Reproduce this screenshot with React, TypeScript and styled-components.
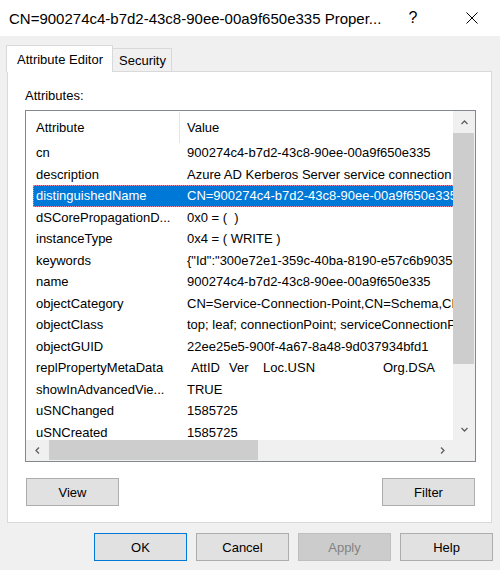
import React from "react";
import styled, { createGlobalStyle } from "styled-components";

const GlobalStyle = createGlobalStyle`
  html, body {
    margin: 0;
    padding: 0;
    background: #f0f0f0;
  }
  body {
    font-family: "Liberation Sans", Arial, sans-serif;
    font-size: 13px;
    color: #000;
  }
  * {
    box-sizing: border-box;
  }
`;

type Attr = {
  name: string;
  value: string;
  selected?: boolean;
  meta?: boolean;
};

const attributes: Attr[] = [
  { name: "cn", value: "900274c4-b7d2-43c8-90ee-00a9f650e335" },
  { name: "description", value: "Azure AD Kerberos Server service connection point" },
  {
    name: "distinguishedName",
    value: "CN=900274c4-b7d2-43c8-90ee-00a9f650e335,CN=AzureADKerberos,OU=Domain Controllers",
    selected: true,
  },
  { name: "dSCorePropagationD...", value: "0x0 = (  )" },
  { name: "instanceType", value: "0x4 = ( WRITE )" },
  { name: "keywords", value: "{\"Id\":\"300e72e1-359c-40ba-8190-e57c6b9035e1\"}" },
  { name: "name", value: "900274c4-b7d2-43c8-90ee-00a9f650e335" },
  { name: "objectCategory", value: "CN=Service-Connection-Point,CN=Schema,CN=Configuration" },
  { name: "objectClass", value: "top; leaf; connectionPoint; serviceConnectionPoint" },
  { name: "objectGUID", value: "22ee25e5-900f-4a67-8a48-9d037934bfd1" },
  { name: "replPropertyMetaData", value: "", meta: true },
  { name: "showInAdvancedVie...", value: "TRUE" },
  { name: "uSNChanged", value: "1585725" },
  { name: "uSNCreated", value: "1585725" },
];

const Chevron = ({ dir }: { dir: "up" | "down" | "left" | "right" }) => {
  const pts = {
    up: "0.5,4 3.5,1 6.5,4",
    down: "0.5,1 3.5,4 6.5,1",
    left: "4,0.5 1,3.5 4,6.5",
    right: "1,0.5 4,3.5 1,6.5",
  }[dir];
  const vertical = dir === "up" || dir === "down";
  return (
    <svg
      width={vertical ? 7 : 5}
      height={vertical ? 5 : 7}
      viewBox={vertical ? "0 0 7 5" : "0 0 5 7"}
    >
      <polyline points={pts} fill="none" stroke="#606060" strokeWidth="1.3" />
    </svg>
  );
};

export default function App() {
  return (
    <Window>
      <GlobalStyle />
      <TitleBar>
        <Title>CN=900274c4-b7d2-43c8-90ee-00a9f650e335 Proper...</Title>
        <CaptionBtn>?</CaptionBtn>
        <CaptionBtn>
          <svg width="12" height="12" viewBox="0 0 12 12">
            <path d="M0.5 0.5 L11.5 11.5 M11.5 0.5 L0.5 11.5" stroke="#000" strokeWidth="1" />
          </svg>
        </CaptionBtn>
      </TitleBar>

      <Content>
        <TabStrip>
          <Tab $active>Attribute Editor</Tab>
          <Tab>Security</Tab>
        </TabStrip>

        <Panel>
          <Label>Attributes:</Label>
          <ListBox>
            <Viewport>
              <Header>
                <HeaderCell $first>Attribute</HeaderCell>
                <HeaderCell>Value</HeaderCell>
              </Header>
              {attributes.map((a) => (
                <Row key={a.name} $selected={a.selected}>
                  <NameCell>{a.name}</NameCell>
                  <ValueCell>
                    {a.meta ? (
                      <>
                        <MetaCol $w={38}>AttID</MetaCol>
                        <MetaCol $w={34}>Ver</MetaCol>
                        <MetaCol $w={120}>Loc.USN</MetaCol>
                        <MetaCol $w={80}>Org.DSA</MetaCol>
                      </>
                    ) : (
                      a.value
                    )}
                  </ValueCell>
                </Row>
              ))}
            </Viewport>
            <VScroll>
              <ArrowBox>
                <Chevron dir="up" />
              </ArrowBox>
              <VTrack>
                <VThumb />
              </VTrack>
              <ArrowBox>
                <Chevron dir="down" />
              </ArrowBox>
            </VScroll>
            <HScroll>
              <ArrowBox>
                <Chevron dir="left" />
              </ArrowBox>
              <HTrack>
                <HThumb />
              </HTrack>
              <ArrowBox>
                <Chevron dir="right" />
              </ArrowBox>
            </HScroll>
            <Corner />
          </ListBox>

          <PanelButtons>
            <Button>View</Button>
            <Button>Filter</Button>
          </PanelButtons>
        </Panel>

        <Footer>
          <Button $default>OK</Button>
          <Button>Cancel</Button>
          <Button disabled>Apply</Button>
          <Button>Help</Button>
        </Footer>
      </Content>
    </Window>
  );
}

const Window = styled.div`
  width: 500px;
  height: 570px;
  background: #f0f0f0;
  overflow: hidden;
`;

const TitleBar = styled.div`
  height: 36px;
  background: #fff;
  display: flex;
  align-items: center;
  padding-left: 9px;
  padding-right: 5px;
`;

const Title = styled.div`
  flex: 1 1 auto;
  min-width: 0;
  font-size: 15px;
  white-space: nowrap;
`;

const CaptionBtn = styled.div`
  flex: 0 0 46px;
  height: 36px;
  display: flex;
  align-items: center;
  justify-content: center;
  font-size: 16px;
  font-weight: 300;
  margin-left: 13px;
`;

const Content = styled.div`
  padding: 9px 8px 0 7px;
`;

const TabStrip = styled.div`
  height: 26px;
  display: flex;
  align-items: flex-end;
`;

const Tab = styled.div<{ $active?: boolean }>`
  position: relative;
  z-index: 1;
  display: flex;
  align-items: center;
  white-space: nowrap;
  border: 1px solid #d9d9d9;
  border-bottom: none;
  ${({ $active }) =>
    $active
      ? `
    height: 27px;
    margin-left: -1px;
    margin-bottom: -1px;
    padding: 0 9px 0 10px;
    background: #fff;
  `
      : `
    height: 23px;
    border-left: none;
    padding: 0 5px 0 6px;
    background: #f0f0f0;
  `}
`;

const Panel = styled.div`
  background: #fff;
  border: 1px solid #d9d9d9;
  padding: 16px 15px 16px 17px;
`;

const Label = styled.div`
  line-height: 16px;
  margin-bottom: 6px;
`;

const ListBox = styled.div`
  width: 451px;
  height: 352px;
  border: 1px solid #828790;
  display: grid;
  grid-template-columns: 1fr 22px;
  grid-template-rows: 1fr 21px;
`;

const Viewport = styled.div`
  overflow: hidden;
  background: #fff;
`;

const Header = styled.div`
  height: 32px;
  margin-bottom: -1px;
  display: grid;
  grid-template-columns: 154px 1fr;
  align-items: center;
`;

const HeaderCell = styled.div<{ $first?: boolean }>`
  height: 31px;
  display: flex;
  align-items: center;
  padding-top: 1px;
  padding-left: ${({ $first }) => ($first ? "10px" : "7px")};
  border-right: ${({ $first }) => ($first ? "1px solid #e5e5e5" : "none")};
`;

const Row = styled.div<{ $selected?: boolean }>`
  height: 21.5px;
  line-height: 21.5px;
  margin-left: 7px;
  width: 640px;
  display: grid;
  grid-template-columns: 147px 1fr;
  white-space: pre;
  background: ${({ $selected }) => ($selected ? "#0078d7" : "transparent")};
  color: ${({ $selected }) => ($selected ? "#fff" : "#000")};
  outline: ${({ $selected }) => ($selected ? "1px dotted #e98aa8" : "none")};
  outline-offset: -1px;
`;

const NameCell = styled.div`
  padding-left: 3px;
  overflow: hidden;
`;

const ValueCell = styled.div`
  padding-left: 7px;
  display: flex;
`;

const MetaCol = styled.span<{ $w: number }>`
  display: inline-block;
  width: ${({ $w }) => $w}px;
  padding-left: 4px;
`;

const VScroll = styled.div`
  background: #f0f0f0;
  display: flex;
  flex-direction: column;
`;

const HScroll = styled.div`
  background: #f0f0f0;
  display: flex;
`;

const ArrowBox = styled.div`
  flex: 0 0 22px;
  display: flex;
  align-items: center;
  justify-content: center;
`;

const VTrack = styled.div`
  flex: 1;
  padding: 0 1px 0 0;
`;

const VThumb = styled.div`
  height: 231px;
  background: #cdcdcd;
`;

const HTrack = styled.div`
  flex: 1;
  padding: 0 0 1px 1px;
`;

const HThumb = styled.div`
  width: 209px;
  height: 100%;
  background: #cdcdcd;
`;

const Corner = styled.div`
  background: #f0f0f0;
`;

const PanelButtons = styled.div`
  margin-top: 16px;
  padding: 0 1px;
  display: flex;
  justify-content: space-between;
`;

const Button = styled.button<{ $default?: boolean }>`
  width: 93px;
  height: 28px;
  font-family: "Liberation Sans", Arial, sans-serif;
  font-size: 13px;
  color: #000;
  background: #e1e1e1;
  border: 1px solid ${({ $default }) => ($default ? "#0078d7" : "#adadad")};
  padding: 0;
  &:disabled {
    background: #cccccc;
    border-color: #bfbfbf;
    color: #838383;
  }
`;

const Footer = styled.div`
  margin-top: 10px;
  margin-right: -1px;
  display: flex;
  justify-content: flex-end;
  gap: 9px;
`;
